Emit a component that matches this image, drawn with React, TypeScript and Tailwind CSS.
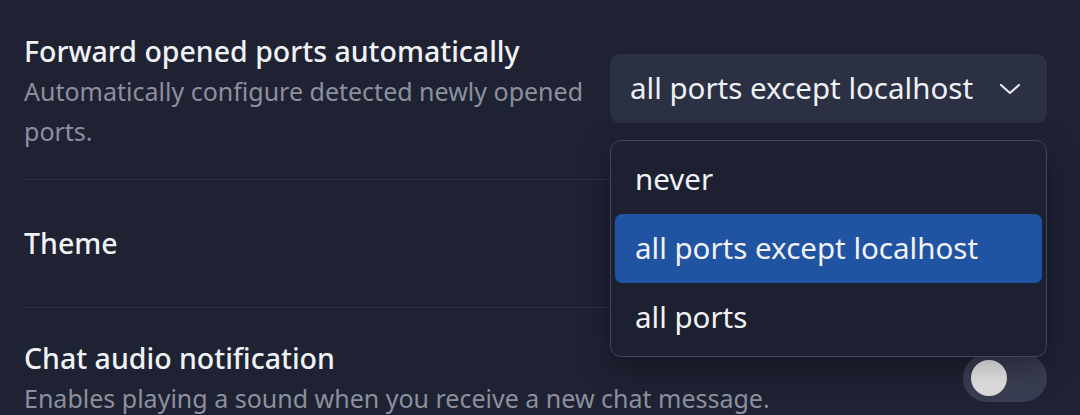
import React from 'react';

const font = { fontFamily: '"Noto Sans", "Liberation Sans", sans-serif' };

const Chevron: React.FC = () => (
  <svg width="22" height="14" viewBox="0 0 22 14" fill="none" className="text-gray-200">
    <path d="M2 3l9 8 9-8" stroke="currentColor" strokeWidth="2.2" strokeLinecap="round" strokeLinejoin="round" />
  </svg>
);

const SettingText: React.FC<{ title: string; desc?: string }> = ({ title, desc }) => (
  <div className="w-[574px] shrink-0">
    <div className="text-[28.5px] leading-[40px] font-medium text-[#f1f2f5]">{title}</div>
    {desc && <div className="text-[25px] leading-[40px] text-[#8c909d]">{desc}</div>}
  </div>
);

const options = ['never', 'all ports except localhost', 'all ports'];

export default function App() {
  const selected = 'all ports except localhost';
  return (
    <div className="w-[1080px] h-[415px] overflow-hidden bg-[#1e2233] pt-[3px] pl-6 pr-[33px]" style={font}>
      <div className="flex items-center gap-3 py-7 border-b border-[#2d3142]">
        <SettingText
          title="Forward opened ports automatically"
          desc="Automatically configure detected newly opened ports."
        />
        <div className="relative flex-1 mb-[5px]">
          <div className="h-[69px] rounded-[10px] bg-[#2c3043] flex items-center justify-between pl-5 pr-[26px]">
            <span className="text-[29.5px] text-[#eef0f4]">{selected}</span>
            <Chevron />
          </div>
          <div className="absolute left-0 right-0 top-[86px] z-10 rounded-[11px] border border-[#41465b] bg-[#1d2030] p-1 shadow-[0_10px_30px_rgba(0,0,0,0.35)]">
            {options.map((o) => (
              <div
                key={o}
                className={`h-[69px] flex items-center px-5 rounded-[7px] text-[29.5px] text-[#f1f2f5] ${
                  o === selected ? 'bg-[#2153a3]' : ''
                }`}
              >
                {o}
              </div>
            ))}
          </div>
        </div>
      </div>
      <div className="flex items-center gap-3 pt-7 pb-[30px] border-b border-[#2d3142]">
        <SettingText title="Theme" />
        <div className="flex-1 h-[69px] rounded-[10px] bg-[#2c3043]" />
      </div>
      <div className="flex items-center justify-between pt-[30px] pb-7">
        <div className="w-[800px] shrink-0">
          <div className="text-[28.5px] leading-[40px] font-medium text-[#f1f2f5]">Chat audio notification</div>
          <div className="text-[25px] leading-[40px] text-[#8c909d]">
            Enables playing a sound when you receive a new chat message.
          </div>
        </div>
        <div className="w-[84px] h-[48px] rounded-full bg-[#393d51] flex items-center px-2">
          <div className="w-9 h-9 rounded-full bg-gradient-to-b from-[#f2f2f2] to-[#d9d9d9]" />
        </div>
      </div>
    </div>
  );
}
